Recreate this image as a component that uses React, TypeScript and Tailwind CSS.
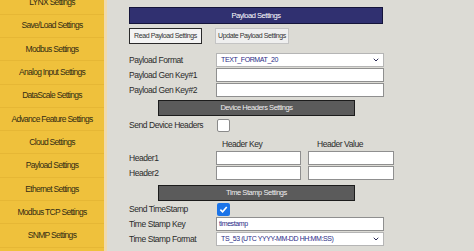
import { ChevronDown } from "lucide-react";

const menu = [
  "LYNX Settings",
  "Save/Load Settings",
  "Modbus Settings",
  "Analog Input Settings",
  "DataScale Settings",
  "Advance Feature Settings",
  "Cloud Settings",
  "Payload Settings",
  "Ethernet Settings",
  "Modbus TCP Settings",
  "SNMP Settings",
];

const font = { fontFamily: '"Liberation Sans", Arial, sans-serif' };

function SectionBar({ title, dark }: { title: string; dark?: boolean }) {
  return (
    <div
      className={
        dark
          ? "ml-[29px] flex h-[16px] w-[197px] items-center justify-center border border-[#1c1c1c] bg-[#5b5b5b] text-[7.5px] tracking-[-0.45px] text-[#eeeeee]"
          : "flex h-[17px] w-[254px] items-center justify-center border border-[#14143a] bg-[#303070] text-[7.5px] tracking-[-0.45px] text-white"
      }
    >
      {title}
    </div>
  );
}

function Field({ label, children }: { label: string; children?: React.ReactNode }) {
  return (
    <div className="mb-px flex h-[14px] items-center">
      <span className="w-[87px] text-[8.5px] tracking-[-0.45px] text-[#2a2a2a]">{label}</span>
      {children}
    </div>
  );
}

function TextBox({ value, w = "w-[168px]" }: { value?: string; w?: string }) {
  return (
    <div
      className={`flex h-[14px] ${w} items-center border border-[#8f8f8f] bg-white px-[2px] text-[7px] tracking-[-0.4px] text-[#2b2b86]`}
    >
      {value}
    </div>
  );
}

function Select({ value }: { value: string }) {
  return (
    <div className="flex h-[14px] w-[168px] items-center justify-between border border-[#b5b5b5] bg-white pl-[4px] pr-[3px] text-[7px] tracking-[-0.4px] text-[#2b2b86]">
      <span>{value}</span>
      <ChevronDown size={8} strokeWidth={3} className="text-[#2a2a55]" />
    </div>
  );
}

function CheckBox({ checked }: { checked?: boolean }) {
  return checked ? (
    <div className="flex h-[13px] w-[13px] items-center justify-center rounded-[2px] bg-[#1a73e8]">
      <svg width="9" height="9" viewBox="0 0 10 10">
        <path d="M1.5 5.2 L4 7.6 L8.6 2.2" fill="none" stroke="white" strokeWidth="1.8" />
      </svg>
    </div>
  ) : (
    <div className="h-[13px] w-[13px] rounded-[2px] border border-[#8a8a8a] bg-white" />
  );
}

export default function App() {
  return (
    <div style={font} className="flex h-[251px] w-[474px] overflow-hidden bg-[#dcdbd5]">
      {/* Sidebar */}
      <aside className="w-[107px] shrink-0 border-r-[3px] border-[#f0d9ab] bg-[#efc13c]">
        <ul className="-mt-[8.6px]">
          {menu.map((m) => (
            <li
              key={m}
              className="flex h-[23.3px] items-center justify-center border-b border-[#e6b735] text-[8.5px] tracking-[-0.7px] text-[#332c14]"
            >
              {m}
            </li>
          ))}
        </ul>
      </aside>

      {/* Main */}
      <main className="flex-1 pl-[22px] pt-[7px]">
        <SectionBar title="Payload Settings" />

        <div className="mt-[4px] flex gap-[13px]">
          <button className="h-[16px] w-[73px] border border-[#2a2a2a] bg-[#f4f4f4] text-[7px] tracking-[-0.4px] text-[#333]">
            Read Payload Settings
          </button>
          <button className="h-[16px] w-[74px] border border-[#c4c4c4] bg-[#efefef] text-[7px] tracking-[-0.4px] text-[#333]">
            Update Payload Settings
          </button>
        </div>

        <div className="mt-[9px]">
          <Field label="Payload Format">
            <Select value="TEXT_FORMAT_20" />
          </Field>
          <Field label="Payload Gen Key#1">
            <TextBox />
          </Field>
          <Field label="Payload Gen Key#2">
            <TextBox />
          </Field>
        </div>

        <div className="mt-[3px]">
          <SectionBar title="Device Headers Settings" dark />
        </div>

        <div className="mt-[2px]">
          <Field label="Send Device Headers">
            <div className="pl-px">
              <CheckBox />
            </div>
          </Field>
        </div>

        <div className="mt-[6px] flex h-[12px] items-center text-[8.5px] tracking-[-0.45px] text-[#2a2a2a]">
          <span className="ml-[93px] w-[95px]">Header Key</span>
          <span>Header Value</span>
        </div>

        <div className="mt-px">
          <Field label="Header1">
            <TextBox w="w-[85px]" />
            <div className="ml-[7px]">
              <TextBox w="w-[86px]" />
            </div>
          </Field>
          <Field label="Header2">
            <TextBox w="w-[85px]" />
            <div className="ml-[7px]">
              <TextBox w="w-[86px]" />
            </div>
          </Field>
        </div>

        <div className="mt-[5px]">
          <SectionBar title="Time Stamp Settings" dark />
        </div>

        <div className="mt-px">
          <Field label="Send TimeStamp">
            <div className="pl-px">
              <CheckBox checked />
            </div>
          </Field>
          <Field label="Time Stamp Key">
            <TextBox value="timestamp" />
          </Field>
          <Field label="Time Stamp Format">
            <Select value="TS_53 (UTC YYYY-MM-DD HH:MM:SS)" />
          </Field>
        </div>
      </main>
    </div>
  );
}
